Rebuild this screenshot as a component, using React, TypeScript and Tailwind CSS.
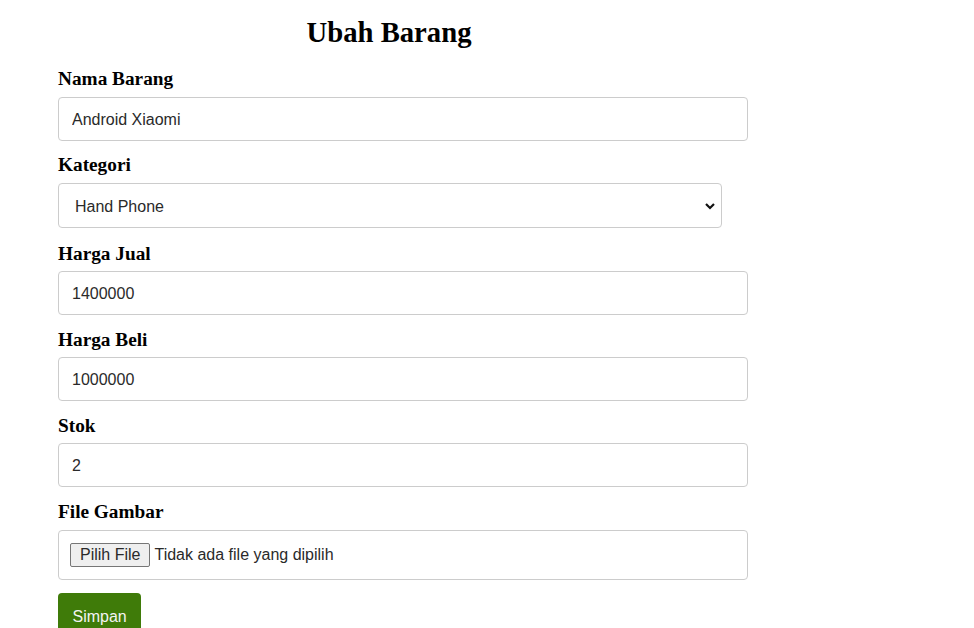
const serif = "font-['Liberation_Serif','Times_New_Roman',serif]"

const FIELDS = [
  { label: "Nama Barang", value: "Android Xiaomi" },
  { label: "Harga Jual", value: "1400000" },
  { label: "Harga Beli", value: "1000000" },
  { label: "Stok", value: "2" },
]

function Label({ children }: { children: string }) {
  return (
    <label className={`${serif} block text-[19.3px] font-bold leading-[21px] text-black`}>{children}</label>
  )
}

function TextField({ label, value }: { label: string; value: string }) {
  return (
    <div className="mt-[13.5px] flex flex-col gap-[7.5px]">
      <Label>{label}</Label>
      <input
        type="text"
        defaultValue={value}
        className="h-[44px] w-[690px] rounded-[4px] border border-[#cccccc] bg-white px-[13px] pt-[2px] text-[16px] text-[#2a2a2a] outline-none"
      />
    </div>
  )
}

export default function App() {
  const [nama, ...rest] = FIELDS
  return (
    <div className="min-h-screen bg-white pl-[58px] font-['Liberation_Sans',Arial,sans-serif]">
      <h2 className={`${serif} w-[662px] pt-[16px] text-center text-[28.7px] font-bold leading-[32px] text-black`}>
        Ubah Barang
      </h2>

      <form className="flex flex-col" onSubmit={(e) => e.preventDefault()}>
        <div className="mt-[6.5px]">
          <TextField {...nama} />
        </div>

        <div className="mt-[13.5px] flex flex-col gap-[7.5px]">
          <Label>Kategori</Label>
          <div className="relative w-[664px]">
            <select
              defaultValue="hp"
              className="h-[45px] w-full appearance-none rounded-[4px] border border-[#cccccc] bg-white pl-[16px] pt-[3px] text-[16px] text-[#2a2a2a] outline-none"
            >
              <option value="hp">Hand Phone</option>
              <option value="laptop">Laptop</option>
            </select>
            <svg
              className="pointer-events-none absolute right-[6px] top-[18px]"
              width="12"
              height="10"
              viewBox="0 0 12 10"
            >
              <path d="M2 3l4 4 4-4" fill="none" stroke="#111" strokeWidth="2.2" />
            </svg>
          </div>
        </div>

        <div className="mt-[1.5px]">
          {rest.map((f) => (
            <TextField key={f.label} {...f} />
          ))}
        </div>

        <div className="mt-[14px] flex flex-col gap-[7.5px]">
          <Label>File Gambar</Label>
          <div className="flex h-[50px] w-[690px] items-center rounded-[4px] border border-[#cccccc] bg-white pl-[11px] pt-[1px] text-[16px] text-[#2a2a2a]">
            <span className="flex h-[24px] items-center rounded-[2px] border border-[#767676] bg-[#efefef] px-[9px] text-[16px] leading-none">
              Pilih File
            </span>
            <span className="ml-[4px]">Tidak ada file yang dipilih</span>
          </div>
        </div>

        <div className="mt-[13px]">
          <button
            type="submit"
            className="h-[46px] rounded-[4px] bg-[#3f7b09] px-[14.5px] pt-[3px] text-[16px] text-[#f4f4f4]"
          >
            Simpan
          </button>
        </div>
      </form>
    </div>
  )
}
